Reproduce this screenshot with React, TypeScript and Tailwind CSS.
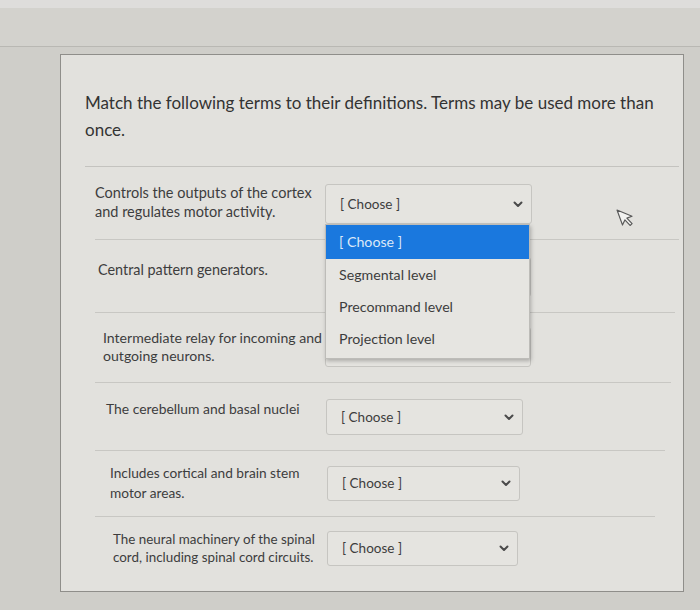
const rows = [
  {
    text: ["Controls the outputs of the cortex", "and regulates motor activity."],
    h: "h-[72px]",
    pl: "pl-[10px]",
    textPt: "pt-[16px]",
    size: "text-[14.5px] leading-[19px]",
    sel: "mt-[17px] ml-[16px] w-[207px] h-[40px]",
    sep: "mr-[0px]",
    open: true,
  },
  {
    text: ["Central pattern generators."],
    h: "h-[72px]",
    pl: "pl-[13px]",
    textPt: "pt-[20px]",
    size: "text-[14.4px] leading-[19px]",
    sel: "mt-[17px] ml-[13px] w-[206px] h-[40px]",
    sep: "mr-[4px]",
    hidden: true,
  },
  {
    text: ["Intermediate relay for incoming and", "outgoing neurons."],
    h: "h-[69px]",
    pl: "pl-[18px]",
    textPt: "pt-[16px]",
    size: "text-[14.1px] leading-[18px]",
    sel: "mt-[14px] ml-[8px] w-[206px] h-[40px]",
    sep: "mr-[8px]",
    hidden: true,
  },
  {
    text: ["The cerebellum and basal nuclei"],
    h: "h-[67px]",
    pl: "pl-[21px]",
    textPt: "pt-[16px]",
    size: "text-[13.9px] leading-[19px]",
    sel: "mt-[16px] ml-[6px] w-[197px] h-[36px]",
    sep: "mr-[14px]",
  },
  {
    text: ["Includes cortical and brain stem", "motor areas."],
    h: "h-[65px]",
    pl: "pl-[25px]",
    textPt: "pt-[12px]",
    size: "text-[13.7px] leading-[20px]",
    sel: "mt-[15px] ml-[3px] w-[193px] h-[35px]",
    sep: "mr-[24px]",
  },
  {
    text: ["The neural machinery of the spinal", "cord, including spinal cord circuits."],
    h: "h-[79px]",
    pl: "pl-[28px]",
    textPt: "pt-[13px]",
    size: "text-[13.4px] leading-[18px]",
    sel: "mt-[14px] ml-[0px] w-[191px] h-[35px]",
    sep: "mr-[30px]",
    last: true,
  },
];

function Chevron() {
  return (
    <svg width="10" height="7" viewBox="0 0 10 7" className="shrink-0">
      <polyline
        points="1.5,1.5 5,5 8.5,1.5"
        fill="none"
        stroke="#4a4a4a"
        strokeWidth="2"
        strokeLinecap="round"
        strokeLinejoin="round"
      />
    </svg>
  );
}

function Dropdown() {
  const items = ["Segmental level", "Precommand level", "Projection level"];
  return (
    <div className="absolute left-0 top-[40px] w-[205px] h-[135px] bg-[#e6e5e1] border border-[#bdbcb8] shadow-[1px_2px_4px_rgba(0,0,0,0.25)] z-10">
      <div className="h-[34px] bg-[#1a78de] text-[#dce9f8] flex items-center pl-[13px] text-[14.2px]">
        [ Choose ]
      </div>
      {items.map((t) => (
        <div key={t} className="h-[32px] flex items-center pl-[13px] text-[14.2px] text-[#3d3d3d] first:h-[33px]">
          {t}
        </div>
      ))}
    </div>
  );
}

function Cursor() {
  return (
    <svg width="16" height="22" viewBox="0 0 16 22" className="absolute left-[619px] top-[206px] -rotate-[20deg]">
      <path
        d="M1 1 L1 17 L5 13 L8 20 L10.5 19 L7.5 12 L13 12 Z"
        fill="#f2f2f0"
        stroke="#5a5a5a"
        strokeWidth="1.2"
        strokeLinejoin="round"
      />
    </svg>
  );
}

export default function App() {
  return (
    <div className="relative w-[700px] h-[610px] bg-[#cfcec9] overflow-hidden font-['Lato',sans-serif] text-[#3d3d3d]">
      <div className="h-[8px] bg-[#dedddb]" />
      <div className="h-[39px] bg-[#d3d2cd] border-b border-[#b9b8b3]" />
      <div className="pl-[60px] pr-[16px] pt-[7px]">
        <div className="h-[538px] bg-[#e2e1dd] border border-[#8f8e8a] pl-[24px] pr-[4px] pt-[34px]">
          <p className="text-[17px] leading-[27px] text-[#333]">
            Match the following terms to their definitions. Terms may be used more than
            <br />
            once.
          </p>
          <div className="mt-[23px] border-t border-[#c4c3bf]" />
          {rows.map((r, i) => (
            <div key={i}>
              <div className={`flex ${r.h} ${r.pl}`}>
                <div className={`w-[214px] shrink-0 ${r.textPt} ${r.size}`}>
                  {r.text.map((l) => (
                    <div key={l} className="whitespace-nowrap">{l}</div>
                  ))}
                </div>
                <div className={`relative ${r.sel}`}>
                  <div className="h-full w-full border border-[#c6c5c1] rounded-[3px] bg-[#e5e4e0] flex items-center justify-between pl-[14px] pr-[8px] text-[13.5px]">
                    {!r.hidden && <span>[ Choose ]</span>}
                    {!r.hidden && <Chevron />}
                  </div>
                  {r.open && <Dropdown />}
                </div>
              </div>
              {!r.last && <div className={`border-t border-[#c8c7c3] ml-[10px] ${r.sep}`} />}
            </div>
          ))}
        </div>
      </div>
      <Cursor />
    </div>
  );
}
